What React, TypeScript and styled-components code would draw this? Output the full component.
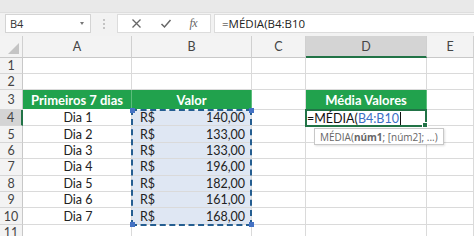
import * as React from "react"
import styled, { createGlobalStyle } from "styled-components"

const GlobalStyle = createGlobalStyle`
  html, body {
    margin: 0;
    padding: 0;
    background: #ffffff;
  }
  body {
    font-family: Lato, "Liberation Sans", sans-serif;
    width: 474px;
    height: 236px;
    overflow: hidden;
  }
`

const green = "#21a24d"
const selGreen = "#217346"

const Window = styled.div`
  width: 474px;
  height: 236px;
  display: flex;
  flex-direction: column;
  overflow: hidden;
`

const TopStrip = styled.div`
  height: 12px;
  background: #e9e9e9;
  border-bottom: 1px solid #dedede;
  flex-shrink: 0;
`

const FormulaBar = styled.div`
  height: 23px;
  display: flex;
  align-items: flex-start;
  padding: 1px 0 0 5px;
  background: #f2f2f2;
  flex-shrink: 0;
  box-sizing: border-box;
`

const NameBox = styled.div`
  width: 86px;
  height: 19px;
  box-sizing: border-box;
  background: #fff;
  border: 1px solid #d4d4d4;
  display: flex;
  align-items: center;
  justify-content: space-between;
  padding: 0 6px 0 4px;
  font-family: "Open Sans", "Noto Sans", sans-serif;
  font-size: 11px;
  color: #333;
`

const Caret = styled.span`
  width: 0;
  height: 0;
  border-left: 2.5px solid transparent;
  border-right: 2.5px solid transparent;
  border-top: 3px solid #777;
`

const Grip = styled.div`
  width: 26px;
  height: 19px;
  display: flex;
  flex-direction: column;
  align-items: center;
  justify-content: center;
  gap: 2px;
`

const Dot = styled.span`
  width: 2px;
  height: 2px;
  background: #b5b5b5;
  border-radius: 1px;
`

const ButtonBox = styled.div`
  width: 94px;
  height: 19px;
  box-sizing: border-box;
  background: #fff;
  border: 1px solid #dcdcdc;
  display: flex;
  align-items: center;
  justify-content: space-around;
  padding: 0 4px;
`

const Fx = styled.span`
  font-family: "Liberation Serif", serif;
  font-style: italic;
  font-size: 12px;
  color: #666;
  letter-spacing: -0.5px;
`

const FormulaInput = styled.div`
  flex: 1;
  height: 19px;
  margin-left: 3px;
  box-sizing: border-box;
  background: #fff;
  border: 1px solid #dcdcdc;
  border-right: none;
  display: flex;
  align-items: center;
  padding-left: 7px;
  font-family: "Open Sans", "Noto Sans", sans-serif;
  font-size: 11.5px;
  color: #222;
`

const Sheet = styled.div`
  flex: 1;
  display: grid;
  grid-template-columns: 23px 109px 120px 54px 121px 1fr;
  grid-template-rows: 22px 16px 16px 20px repeat(7, 16.4px) 1fr;
`

type Pos = { $r: number; $c: number }

const place = (p: Pos) => `grid-row: ${p.$r}; grid-column: ${p.$c};`

const ColHead = styled.div<Pos & { $active?: boolean }>`
  ${place}
  background: ${(p) => (p.$active ? "#d4d4d4" : "#f3f3f3")};
  border-right: 1px solid #d0d0d0;
  border-bottom: ${(p) => (p.$active ? `2px solid ${selGreen}` : "1px solid #c8c8c8")};
  display: flex;
  align-items: center;
  justify-content: center;
  font-size: 12.5px;
  color: #444;
  box-sizing: border-box;
`

const Corner = styled(ColHead)`
  position: relative;
  &::after {
    content: "";
    position: absolute;
    right: 3px;
    bottom: 3px;
    width: 0;
    height: 0;
    border-left: 11px solid transparent;
    border-bottom: 11px solid #c4c4c4;
  }
`

const RowHead = styled.div<Pos & { $active?: boolean }>`
  ${place}
  background: ${(p) => (p.$active ? "#d4d4d4" : "#f3f3f3")};
  border-right: ${(p) => (p.$active ? `2px solid ${selGreen}` : "1px solid #c8c8c8")};
  border-bottom: 1px solid #d6d6d6;
  display: flex;
  align-items: center;
  justify-content: center;
  font-size: 12.5px;
  color: #444;
  box-sizing: border-box;
`

const Cell = styled.div<Pos & { $bg?: string; $center?: boolean }>`
  ${place}
  background: ${(p) => p.$bg || "#fff"};
  border-right: 1px solid #dadada;
  border-bottom: 1px solid #dadada;
  box-sizing: border-box;
  display: flex;
  align-items: center;
  justify-content: ${(p) => (p.$center ? "center" : "flex-start")};
  padding: 0 6px 0 8px;
  font-size: 12.5px;
  color: #222;
  white-space: nowrap;
  min-width: 0;
`

const GreenCell = styled(Cell)`
  background: ${green};
  border-right: 1px solid #5cbd7c;
  border-bottom: 1px solid #ffffff;
  color: #fff;
  font-weight: 700;
  font-size: 13px;
  justify-content: center;
  padding: 0;
`

const Money = styled.div`
  flex: 1;
  display: flex;
  justify-content: space-between;
`

const Selection = styled.div`
  grid-column: 3;
  grid-row: 5 / 12;
  border: 2px dashed #255e91;
  margin: -1px 0 -1px -1px;
  position: relative;
  pointer-events: none;
  z-index: 1;
`

const Handle = styled.span<{ $x: "l" | "r"; $y: "t" | "b" }>`
  position: absolute;
  width: 5px;
  height: 5px;
  background: #4472c4;
  ${(p) => (p.$x === "l" ? "left: -3.5px;" : "right: -3.5px;")}
  ${(p) => (p.$y === "t" ? "top: -3.5px;" : "bottom: -3.5px;")}
`

const EditCell = styled.div`
  grid-column: 5;
  grid-row: 5;
  position: relative;
  border: 2px solid ${selGreen};
  margin: -1px 0 -1px -1px;
  background: #fff;
  display: flex;
  align-items: center;
  font-size: 12.5px;
  color: #111;
  white-space: nowrap;
  z-index: 2;
`

const Ref = styled.span`
  color: #3a6fc4;
`

const TextCursor = styled.span`
  width: 1px;
  height: 13px;
  background: #111;
  margin-left: 1px;
`

const FillHandle = styled.span`
  position: absolute;
  right: -3px;
  bottom: -3px;
  width: 4px;
  height: 4px;
  background: ${selGreen};
  border: 1px solid #fff;
`

const Tooltip = styled.div`
  position: absolute;
  top: calc(100% + 3px);
  left: 7px;
  height: 15px;
  padding: 0 5px;
  background: #fff;
  border: 1px solid #c8c8c8;
  box-shadow: 1px 1px 2px rgba(0, 0, 0, 0.12);
  display: flex;
  align-items: center;
  font-family: "Open Sans", "Noto Sans", sans-serif;
  font-size: 10px;
  color: #666;
  white-space: nowrap;
`

const data = [
  { dia: "Dia 1", valor: "140,00" },
  { dia: "Dia 2", valor: "133,00" },
  { dia: "Dia 3", valor: "133,00" },
  { dia: "Dia 4", valor: "196,00" },
  { dia: "Dia 5", valor: "182,00" },
  { dia: "Dia 6", valor: "161,00" },
  { dia: "Dia 7", valor: "168,00" },
]

const cols = ["A", "B", "C", "D", "E"]
const selBg = "#dfe7f3"

// empty cells for a sheet row, skipping the given columns (2..6 = A..E)
const blanks = (r: number, skip: number[] = []) =>
  [2, 3, 4, 5, 6]
    .filter((c) => !skip.includes(c))
    .map((c) => <Cell key={`${r}-${c}`} $r={r} $c={c} />)

export default function App() {
  return (
    <Window>
      <GlobalStyle />
      <TopStrip />
      <FormulaBar>
        <NameBox>
          <span>B4</span>
          <Caret />
        </NameBox>
        <Grip>
          <Dot />
          <Dot />
          <Dot />
        </Grip>
        <ButtonBox>
          <svg width="11" height="11" viewBox="0 0 11 11">
            <path d="M1.5 1.5 L9.5 9.5 M9.5 1.5 L1.5 9.5" stroke="#666" strokeWidth="1.3" />
          </svg>
          <svg width="12" height="11" viewBox="0 0 12 11">
            <path d="M1.5 6 L4.5 9 L10.5 2" stroke="#666" strokeWidth="1.5" fill="none" />
          </svg>
          <Fx>fx</Fx>
        </ButtonBox>
        <FormulaInput>=MÉDIA(B4:B10</FormulaInput>
      </FormulaBar>
      <Sheet>
        <Corner $r={1} $c={1} />
        {cols.map((c, i) => (
          <ColHead key={c} $r={1} $c={i + 2} $active={c === "D"}>
            {c}
          </ColHead>
        ))}

        <RowHead $r={2} $c={1}>1</RowHead>
        {blanks(2)}
        <RowHead $r={3} $c={1}>2</RowHead>
        {blanks(3)}

        <RowHead $r={4} $c={1}>3</RowHead>
        <GreenCell $r={4} $c={2}>Primeiros 7 dias</GreenCell>
        <GreenCell $r={4} $c={3}>Valor</GreenCell>
        <GreenCell $r={4} $c={5}>Média Valores</GreenCell>
        {blanks(4, [2, 3, 5])}

        {data.map((d, i) => {
          const r = i + 5
          return (
            <React.Fragment key={d.dia}>
              <RowHead $r={r} $c={1} $active={i === 0}>
                {i + 4}
              </RowHead>
              <Cell $r={r} $c={2} $center>
                {d.dia}
              </Cell>
              <Cell $r={r} $c={3} $bg={selBg}>
                <Money>
                  <span>R$</span>
                  <span>{d.valor}</span>
                </Money>
              </Cell>
              {blanks(r, i === 0 ? [2, 3, 5] : [2, 3])}
            </React.Fragment>
          )
        })}

        <RowHead $r={12} $c={1}>11</RowHead>
        {blanks(12)}

        <Selection>
          <Handle $x="l" $y="t" />
          <Handle $x="r" $y="t" />
          <Handle $x="l" $y="b" />
          <Handle $x="r" $y="b" />
        </Selection>

        <EditCell>
          =MÉDIA(<Ref>B4:B10</Ref>
          <TextCursor />
          <FillHandle />
          <Tooltip>
            MÉDIA(<b>núm1</b>; [núm2]; ...)
          </Tooltip>
        </EditCell>
      </Sheet>
    </Window>
  )
}
